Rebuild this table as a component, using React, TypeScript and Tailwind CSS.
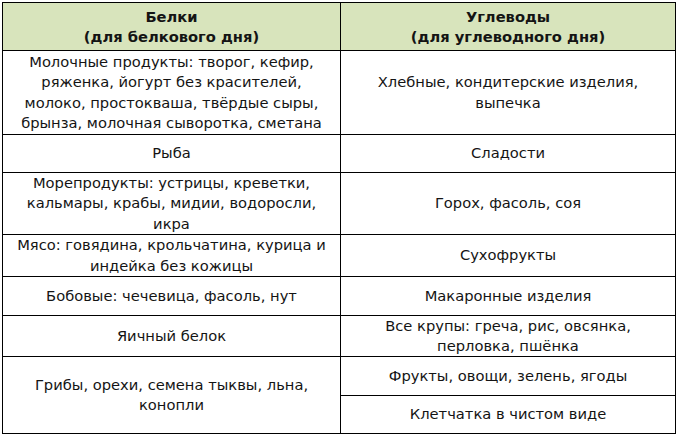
import React from 'react';

const Cell: React.FC<{ text: string; className?: string }> = ({ text, className = '' }) => (
  <div className={`bg-white flex items-center justify-center text-center px-1 leading-[20.5px] ${className}`}>
    <span className="whitespace-pre-line">{text}</span>
  </div>
);

export default function App() {
  return (
    <div className="w-[680px] h-[436px] bg-white pt-[2px] pl-[2px] font-['DejaVu_Sans',sans-serif] text-[14.7px] text-[#141414]">
      <div className="w-[674px] border border-black bg-black grid grid-cols-[337px_334px] grid-rows-[47px_83px_37px_61px_41px_38px_40px_38px_37px] gap-px">
        <div className="bg-[#d8e4bc] flex flex-col items-center justify-center font-bold leading-[20px] pt-[1px]">
          <span>Белки</span>
          <span>(для белкового дня)</span>
        </div>
        <div className="bg-[#d8e4bc] flex flex-col items-center justify-center font-bold leading-[20px] pt-[1px]">
          <span>Углеводы</span>
          <span>(для углеводного дня)</span>
        </div>

        <Cell text={'Молочные продукты: творог, кефир,\nряженка, йогурт без красителей,\nмолоко, простокваша, твёрдые сыры,\nбрынза, молочная сыворотка, сметана'} />
        <Cell text={'Хлебные, кондитерские изделия,\nвыпечка'} />

        <Cell text="Рыба" />
        <Cell text="Сладости" />

        <Cell text={'Морепродукты: устрицы, креветки,\nкальмары, крабы, мидии, водоросли,\nикра'} />
        <Cell text="Горох, фасоль, соя" />

        <Cell text={'Мясо: говядина, крольчатина, курица и\nиндейка без кожицы'} />
        <Cell text="Сухофрукты" />

        <Cell text="Бобовые: чечевица, фасоль, нут" />
        <Cell text="Макаронные изделия" />

        <Cell text="Яичный белок" />
        <Cell text={'Все крупы: греча, рис, овсянка,\nперловка, пшёнка'} />

        <Cell text={'Грибы, орехи, семена тыквы, льна,\nконопли'} className="row-span-2" />
        <Cell text="Фрукты, овощи, зелень, ягоды" />

        <Cell text="Клетчатка в чистом виде" />
      </div>
    </div>
  );
}
